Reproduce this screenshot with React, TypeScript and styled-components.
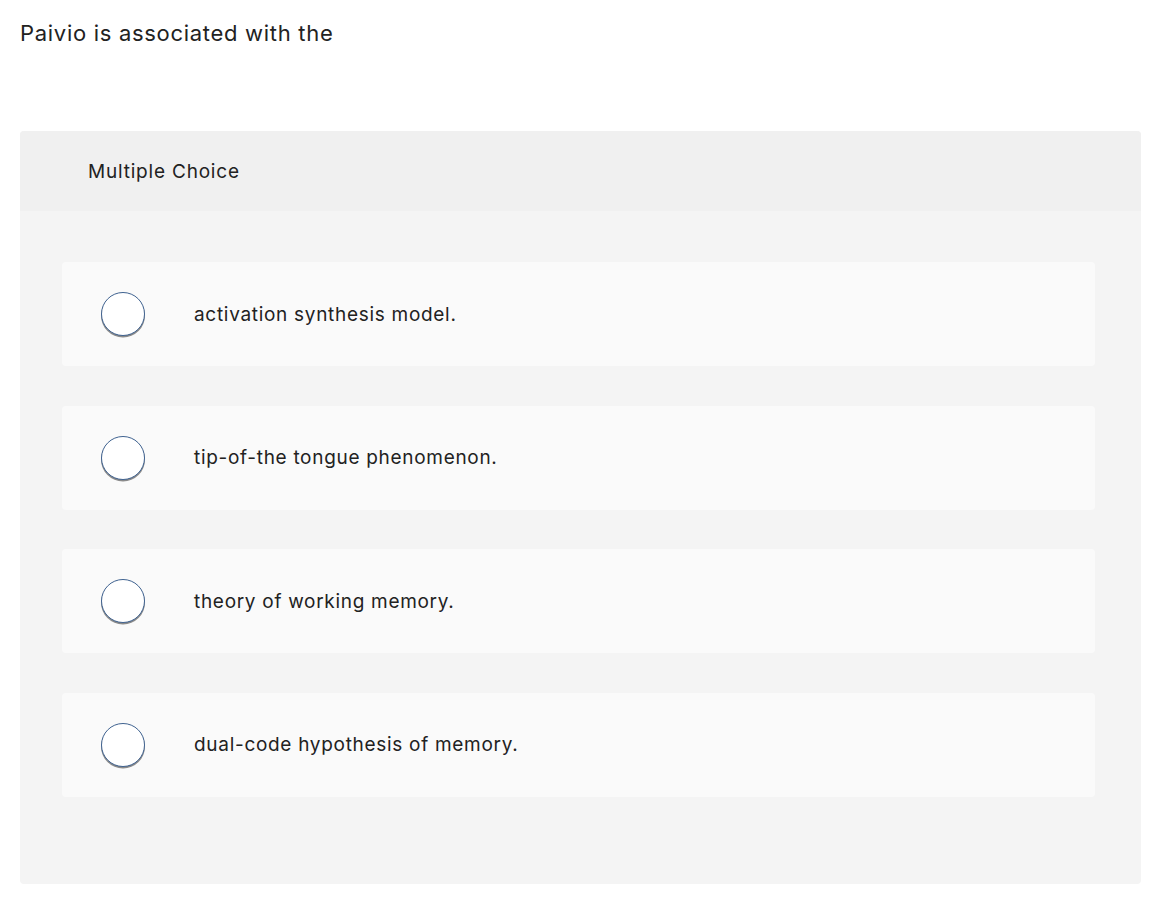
import React from "react";
import styled, { createGlobalStyle } from "styled-components";

const GlobalStyle = createGlobalStyle`
    body {
        margin: 0;
        background: #ffffff;
        font-family: Inter, "Liberation Sans", sans-serif;
        color: #222222;
    }
`

const Page = styled.div`
    padding: 16px 19px 17px 20px;
`

const Question = styled.p`
    margin: 0 0 81px 0;
    font-size: 22px;
    line-height: 34px;
    letter-spacing: 0.7px;
    color: #222222;
`

const Panel = styled.section`
    background: #f4f4f4;
    border-radius: 4px;
    overflow: hidden;
`

const PanelHeader = styled.div`
    height: 80px;
    background: #f0f0f0;
    display: flex;
    align-items: center;
    padding-left: 68px;
    font-size: 19px;
    letter-spacing: 0.8px;
    color: #222222;
`

const OptionList = styled.div`
    display: flex;
    flex-direction: column;
    gap: 39.5px;
    padding: 51px 46px 87px 42px;
`

const Option = styled.label`
    height: 104px;
    background: #fafafa;
    border-radius: 4px;
    display: flex;
    align-items: center;
    padding-left: 39px;
    cursor: pointer;
`

const Radio = styled.span`
    box-sizing: border-box;
    width: 44px;
    height: 44px;
    border-radius: 50%;
    border: 1.5px solid #3f6290;
    background: #ffffff;
    box-shadow: 0 1.5px 0 #8a8a8a;
    flex-shrink: 0;
`

const OptionText = styled.span`
    margin-left: 49px;
    font-size: 19px;
    letter-spacing: 0.7px;
    color: #222222;
`

const choices = [
    "activation synthesis model.",
    "tip-of-the tongue phenomenon.",
    "theory of working memory.",
    "dual-code hypothesis of memory.",
]

export default function App() {
    return (
        <Page>
            <GlobalStyle />
            <Question>Paivio is associated with the</Question>
            <Panel>
                <PanelHeader>Multiple Choice</PanelHeader>
                <OptionList>
                    {choices.map((c) => (
                        <Option key={c}>
                            <Radio />
                            <OptionText>{c}</OptionText>
                        </Option>
                    ))}
                </OptionList>
            </Panel>
        </Page>
    )
}
